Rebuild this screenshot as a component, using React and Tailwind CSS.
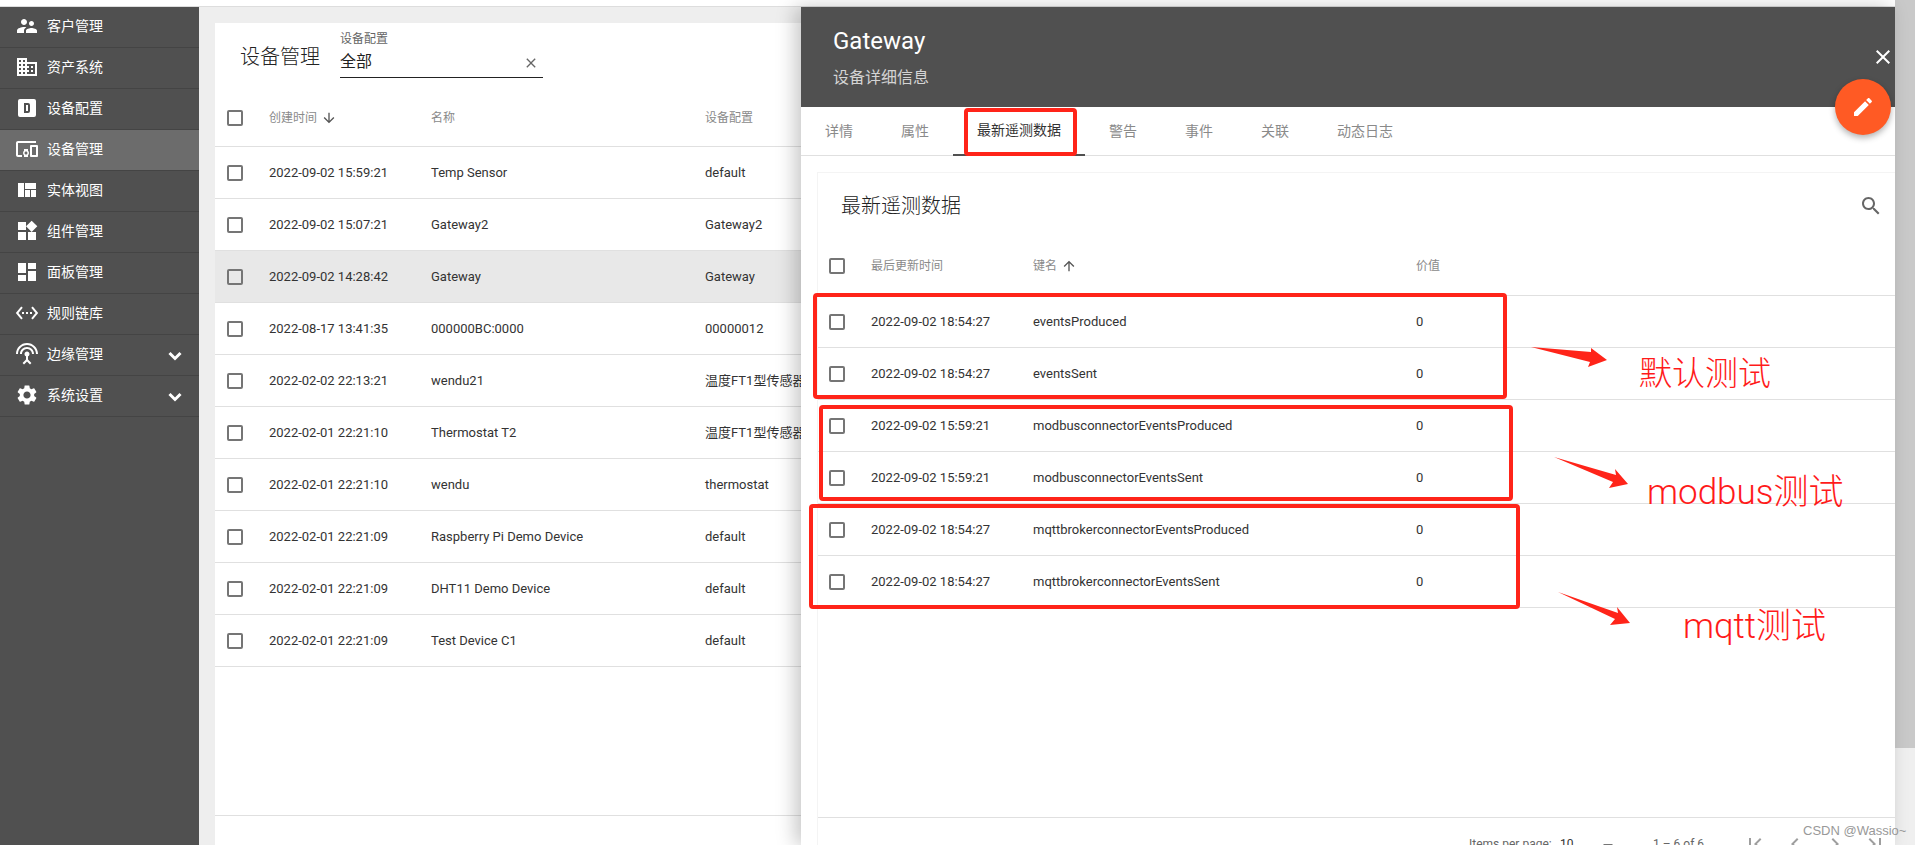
import React from 'react';

const menu = [
  { label: '客户管理', d: 'M16.5 12c1.38 0 2.49-1.12 2.49-2.5S17.88 7 16.5 7C15.12 7 14 8.12 14 9.5s1.12 2.5 2.5 2.5zM9 11c1.66 0 2.99-1.34 2.99-3S10.66 5 9 5C7.34 5 6 6.34 6 8s1.34 3 3 3zm7.5 3c-1.83 0-5.5.92-5.5 2.75V19h11v-2.25c0-1.83-3.67-2.75-5.5-2.75zM9 13c-2.33 0-7 1.17-7 3.5V19h7v-2.25c0-.85.33-2.34 2.37-3.47C10.5 13.1 9.66 13 9 13z' },
  { label: '资产系统', d: 'M12 7V3H2v18h20V7H12zM6 19H4v-2h2v2zm0-4H4v-2h2v2zm0-4H4V9h2v2zm0-4H4V5h2v2zm4 12H8v-2h2v2zm0-4H8v-2h2v2zm0-4H8V9h2v2zm0-4H8V5h2v2zm10 12h-8v-2h2v-2h-2v-2h2v-2h-2V9h8v10zm-2-8h-2v2h2v-2zm0 4h-2v2h2v-2z' },
  { label: '设备配置', d: 'M9,7V17H13A2,2 0 0,0 15,15V9A2,2 0 0,0 13,7H9M11,9H13V15H11V9M5,3H19A2,2 0 0,1 21,5V19A2,2 0 0,1 19,21H5A2,2 0 0,1 3,19V5A2,2 0 0,1 5,3Z' },
  { label: '设备管理', active: true, d: 'M3 6h18V4H3c-1.1 0-2 .9-2 2v12c0 1.1.9 2 2 2h4v-2H3V6zm10 6H9v1.78c-.61.55-1 1.33-1 2.22s.39 1.67 1 2.22V20h4v-1.78c.61-.55 1-1.34 1-2.22s-.39-1.67-1-2.22V12zm-2 5.5c-.83 0-1.5-.67-1.5-1.5s.67-1.5 1.5-1.5 1.5.67 1.5 1.5-.67 1.5-1.5 1.5zM22 8h-6c-.5 0-1 .5-1 1v10c0 .5.5 1 1 1h6c.5 0 1-.5 1-1V9c0-.5-.5-1-1-1zm-1 10h-4v-8h4v8z' },
  { label: '实体视图', d: 'M3 19h6V5H3zM10 5h11v6H10zM10 19h5v-7h-5zM16 19h5v-7h-5z' },
  { label: '组件管理', d: 'M13 13v8h8v-8h-8zM3 21h8v-8H3v8zM3 3v8h8V3H3zm13.66-1.31L11 7.34 16.66 13l5.66-5.66-5.66-5.65z' },
  { label: '面板管理', d: 'M3 13h8V3H3v10zm0 8h8v-6H3v6zm10 0h8V11h-8v10zm0-18v6h8V3h-8z' },
  { label: '规则链库', d: 'M7.77 6.76L6.23 5.48.82 12l5.41 6.52 1.54-1.28L3.42 12l4.35-5.24zM7 13h2v-2H7v2zm10-2h-2v2h2v-2zm-6 2h2v-2h-2v2zm6.77-7.52l-1.54 1.28L20.58 12l-4.35 5.24 1.54 1.28L23.18 12l-5.41-6.52z' },
  { label: '边缘管理', arrow: true, d: 'M12 5c-3.87 0-7 3.13-7 7h2c0-2.76 2.24-5 5-5s5 2.24 5 5h2c0-3.87-3.13-7-7-7zm1 9.29c.88-.39 1.5-1.26 1.5-2.29 0-1.38-1.12-2.5-2.5-2.5S9.5 10.62 9.5 12c0 1.02.62 1.9 1.5 2.29v3.3L7.59 21 9 22.41l3-3 3 3L16.41 21 13 17.59v-3.3zM12 1C5.93 1 1 5.93 1 12h2c0-4.97 4.03-9 9-9s9 4.03 9 9h2c0-6.07-4.93-11-11-11z' },
  { label: '系统设置', arrow: true, d: 'M19.14 12.94c.04-.3.06-.61.06-.94 0-.32-.02-.64-.07-.94l2.03-1.58a.49.49 0 0 0 .12-.61l-1.92-3.32a.488.488 0 0 0-.59-.22l-2.39.96c-.5-.38-1.03-.7-1.62-.94l-.36-2.54a.484.484 0 0 0-.48-.41h-3.84c-.24 0-.43.17-.47.41l-.36 2.54c-.59.24-1.13.57-1.62.94l-2.39-.96c-.22-.08-.47 0-.59.22L2.74 8.87c-.12.21-.08.47.12.61l2.03 1.58c-.05.3-.09.63-.09.94s.02.64.07.94l-2.03 1.58a.49.49 0 0 0-.12.61l1.92 3.32c.12.22.37.29.59.22l2.39-.96c.5.38 1.03.7 1.62.94l.36 2.54c.05.24.24.41.48.41h3.84c.24 0 .44-.17.47-.41l.36-2.54c.59-.24 1.13-.56 1.62-.94l2.39.96c.22.08.47 0 .59-.22l1.92-3.32c.12-.22.07-.47-.12-.61l-2.01-1.58zM12 15.6c-1.98 0-3.6-1.62-3.6-3.6s1.62-3.6 3.6-3.6 3.6 1.62 3.6 3.6-1.62 3.6-3.6 3.6z' },
];

const devices = [
  ['2022-09-02 15:59:21', 'Temp Sensor', 'default'],
  ['2022-09-02 15:07:21', 'Gateway2', 'Gateway2'],
  ['2022-09-02 14:28:42', 'Gateway', 'Gateway'],
  ['2022-08-17 13:41:35', '000000BC:0000', '00000012'],
  ['2022-02-02 22:13:21', 'wendu21', '温度FT1型传感器'],
  ['2022-02-01 22:21:10', 'Thermostat T2', '温度FT1型传感器'],
  ['2022-02-01 22:21:10', 'wendu', 'thermostat'],
  ['2022-02-01 22:21:09', 'Raspberry Pi Demo Device', 'default'],
  ['2022-02-01 22:21:09', 'DHT11 Demo Device', 'default'],
  ['2022-02-01 22:21:09', 'Test Device C1', 'default'],
];

const telemetry = [
  ['2022-09-02 18:54:27', 'eventsProduced'],
  ['2022-09-02 18:54:27', 'eventsSent'],
  ['2022-09-02 15:59:21', 'modbusconnectorEventsProduced'],
  ['2022-09-02 15:59:21', 'modbusconnectorEventsSent'],
  ['2022-09-02 18:54:27', 'mqttbrokerconnectorEventsProduced'],
  ['2022-09-02 18:54:27', 'mqttbrokerconnectorEventsSent'],
];

const tabs = ['详情', '属性', '最新遥测数据', '警告', '事件', '关联', '动态日志'];

const Icon = ({ d, className }) => (
  <svg viewBox="0 0 24 24" fill="currentColor" fillRule="evenodd" className={className}>
    <path d={d} />
  </svg>
);

const Checkbox = () => (
  <div className="w-[16px] h-[16px] border-2 border-[#757575] rounded-[2px] shrink-0" />
);

const Sidebar = () => (
  <div className="w-[199px] shrink-0 bg-[#505050] text-white">
    {menu.map(item => (
      <div
        key={item.label}
        className={`h-[41px] pb-[2px] flex items-center border-b border-[#444444] ${item.active ? 'bg-[#6c6c6c]' : ''}`}
      >
        <div className="w-[47px] shrink-0 flex justify-center pl-[7px]">
          <Icon d={item.d} className="w-[24px] h-[24px]" />
        </div>
        <span className="text-[14px] flex-1">{item.label}</span>
        {item.arrow && (
          <svg viewBox="0 0 14 10" fill="none" stroke="currentColor" strokeWidth="3" className="w-[14px] h-[10px] mr-[17px] mt-[3px]">
            <path d="M1.5 2 7 7.5 12.5 2" />
          </svg>
        )}
      </div>
    ))}
  </div>
);

const DeviceCard = () => (
  <div className="h-full bg-white flex flex-col">
    <div className="h-[65px] shrink-0 flex">
      <div className="w-[125px] pl-[25px] pt-[20px] text-[20px] leading-[28px] font-light text-[#222222]">设备管理</div>
      <div className="w-[203px] h-[47px] mt-[8px] border-b border-[#222222] relative">
        <div className="text-[12px] leading-[16px] text-[#666666]">设备配置</div>
        <div className="text-[16px] leading-[22px] mt-[4px] text-[#222222]">全部</div>
        <Icon
          d="M19 6.41L17.59 5 12 10.59 6.41 5 5 6.41 10.59 12 5 17.59 6.41 19 12 13.41 17.59 19 19 17.59 13.41 12z"
          className="w-[16px] h-[16px] absolute right-[4px] top-[24px] text-[#666666]"
        />
      </div>
    </div>
    <div className="h-[59px] pt-[1px] shrink-0 flex items-center border-b border-[#e0e0e0] text-[12px] text-[#8a8a8a]">
      <div className="w-[54px] pl-[12px] shrink-0"><Checkbox /></div>
      <div className="w-[162px] shrink-0 flex items-center gap-[4px]">
        创建时间
        <Icon d="M20 12l-1.41-1.41L13 16.17V4h-2v12.17l-5.58-5.59L4 12l8 8 8-8z" className="w-[16px] h-[16px] text-[#555555]" />
      </div>
      <div className="w-[274px] shrink-0">名称</div>
      <div>设备配置</div>
    </div>
    {devices.map(row => (
      <div
        key={row[0] + row[1]}
        className={`h-[52px] shrink-0 flex items-center border-b border-[#e0e0e0] text-[13px] text-[#333333] ${row[1] === 'Gateway' ? 'bg-[#e8e8e8]' : ''}`}
      >
        <div className="w-[54px] pl-[12px] shrink-0"><Checkbox /></div>
        <div className="w-[162px] shrink-0">{row[0]}</div>
        <div className="w-[274px] shrink-0">{row[1]}</div>
        <div>{row[2]}</div>
      </div>
    ))}
    <div className="flex-1" />
    <div className="h-[30px] shrink-0 border-t border-[#e0e0e0]" />
  </div>
);

const Drawer = () => (
  <div className="absolute left-[801px] right-0 top-[7px] bottom-0 bg-white flex flex-col overflow-hidden shadow-[-6px_0_18px_rgba(0,0,0,0.22)]">
    <div className="h-[100px] shrink-0 bg-[#505050] pl-[32px] pt-[19px] text-white">
      <div className="text-[24px] leading-[30px]">Gateway</div>
      <div className="text-[16px] leading-[22px] mt-[11px] text-[#d4d4d4]">设备详细信息</div>
    </div>
    <Icon
      d="M19 6.41L17.59 5 12 10.59 6.41 5 5 6.41 10.59 12 5 17.59 6.41 19 12 13.41 17.59 19 19 17.59 13.41 12z"
      className="w-[24px] h-[24px] absolute right-0 top-[38px] text-white"
    />
    <div className="absolute right-[4px] top-[72px] w-[56px] h-[56px] rounded-full bg-[#ff5a24] flex items-center justify-center text-white shadow-[0_3px_6px_rgba(0,0,0,0.3)]">
      <Icon d="M3 17.25V21h3.75L17.81 9.94l-3.75-3.75L3 17.25zM20.71 7.04c.39-.39.39-1.02 0-1.41l-2.34-2.34c-.39-.39-1.02-.39-1.41 0l-1.83 1.83 3.75 3.75 1.83-1.83z" className="w-[24px] h-[24px]" />
    </div>
    <div className="h-[49px] shrink-0 flex border-b border-[#e0e0e0] text-[14px]">
      {tabs.map(tab => (
        <div
          key={tab}
          className={`h-[49px] px-[24px] flex items-center ${tab === '最新遥测数据' ? 'text-[#333333] border-b-2 border-[#505050]' : 'text-[#8a8a8a]'}`}
        >
          {tab}
        </div>
      ))}
    </div>
    <div className="flex-1 min-h-0 pl-[16px] pt-[16px]">
      <div className="h-[700px] border-l border-t border-[#f4f4f4]">
        <div className="h-[64px] flex items-center justify-between pr-[12px] pt-[1px]">
          <div className="pl-[23px] text-[20px] font-light text-[#222222]">最新遥测数据</div>
          <Icon d="M15.5 14h-.79l-.28-.27C15.41 12.59 16 11.11 16 9.5 16 5.91 13.09 3 9.5 3S3 5.91 3 9.5 5.91 16 9.5 16c1.61 0 3.09-.59 4.23-1.57l.27.28v.79l5 4.99L20.49 19l-4.99-5zm-6 0C7.01 14 5 11.99 5 9.5S7.01 5 9.5 5 14 7.01 14 9.5 11.99 14 9.5 14z" className="w-[24px] h-[24px] text-[#666666]" />
        </div>
        <div className="h-[59px] flex items-center border-b border-[#e0e0e0] text-[12px] text-[#8a8a8a]">
          <div className="w-[53px] pl-[11px] shrink-0"><Checkbox /></div>
          <div className="w-[162px] shrink-0">最后更新时间</div>
          <div className="w-[383px] shrink-0 flex items-center gap-[4px]">
            键名
            <Icon d="M4 12l1.41 1.41L11 7.83V20h2V7.83l5.58 5.59L20 12l-8-8-8 8z" className="w-[16px] h-[16px] text-[#555555]" />
          </div>
          <div>价值</div>
        </div>
        {telemetry.map(row => (
          <div key={row[1]} className="h-[52px] pt-[1px] flex items-center border-b border-[#e0e0e0] text-[13px] text-[#333333]">
            <div className="w-[53px] pl-[11px] shrink-0"><Checkbox /></div>
            <div className="w-[162px] shrink-0">{row[0]}</div>
            <div className="w-[383px] shrink-0">{row[1]}</div>
            <div>0</div>
          </div>
        ))}
        <div className="h-[209px]" />
        <div className="border-t border-[#e0e0e0] pt-[18px] pl-[651px] flex text-[12px] leading-[16px] text-[#666666]">
          <span className="w-[91px] shrink-0">Items per page:</span>
          <span className="w-[43px] shrink-0 text-[#333333]">10</span>
          <svg viewBox="0 0 10 5" className="w-[10px] h-[5px] mt-[8px] shrink-0 text-[#757575]" fill="currentColor"><path d="M0 0h10L5 5z" /></svg>
          <span className="ml-[40px] w-[90px] shrink-0">1 – 6 of 6</span>
          <div className="flex gap-[16px] -mt-[4px] text-[#9e9e9e]">
            <Icon d="M18.41 16.59L13.82 12l4.59-4.59L17 6l-6 6 6 6zM6 6h2v12H6z" className="w-[24px] h-[24px]" />
            <Icon d="M15.41 7.41L14 6l-6 6 6 6 1.41-1.41L10.83 12z" className="w-[24px] h-[24px]" />
            <Icon d="M10 6L8.59 7.41 13.17 12l-4.58 4.59L10 18l6-6z" className="w-[24px] h-[24px]" />
            <Icon d="M5.59 7.41L10.18 12l-4.59 4.59L7 18l6-6-6-6zM16 6h2v12h-2z" className="w-[24px] h-[24px]" />
          </div>
        </div>
      </div>
    </div>
  </div>
);

// 截图上手工加的红框、箭头和文字
const Annotations = () => (
  <>
    <div className="absolute left-[964px] top-[108px] w-[113px] h-[48px] border-4 border-[#ff2419] rounded-[4px]" />
    <div className="absolute left-[813px] top-[293px] w-[694px] h-[106px] border-4 border-[#ff2419] rounded-[4px]" />
    <div className="absolute left-[819px] top-[405px] w-[694px] h-[96px] border-4 border-[#ff2419] rounded-[4px]" />
    <div className="absolute left-[809px] top-[504px] w-[711px] h-[105px] border-4 border-[#ff2419] rounded-[4px]" />
    <svg className="absolute left-0 top-0 w-[1916px] h-[845px] pointer-events-none" viewBox="0 0 1916 845" fill="#ff2419">
      <polygon points="1531,347 1591,352 1591,348 1607,360 1588,367 1590,362" />
      <polygon points="1554,457 1616,475 1615,469 1628,484 1609,488 1613,482" />
      <polygon points="1558,592 1618,613 1617,607 1630,623 1610,625 1615,619" />
    </svg>
    <div className="absolute left-[1639px] top-[350px] text-[33px] leading-[48px] font-light text-[#ff1a1a]">默认测试</div>
    <div className="absolute left-[1647px] top-[469px] text-[35px] leading-[48px] font-light text-[#ff1a1a]">modbus测试</div>
    <div className="absolute left-[1683px] top-[603px] text-[35px] leading-[48px] font-light text-[#ff1a1a]">mqtt测试</div>
    <div className="absolute left-[1803px] top-[823px] text-[13px] leading-[16px] text-[#999999] font-[family-name:'Liberation_Sans',sans-serif]">CSDN @Wassio~</div>
  </>
);

export default function App() {
  return (
    <div className="w-[1916px] h-[845px] relative overflow-hidden bg-white flex font-[family-name:Roboto,'Noto_Sans_CJK_SC',sans-serif]">
      <div className="flex-1 min-w-0 relative flex flex-col">
        <div className="h-[7px] shrink-0 bg-white border-b border-[#dddddd]" />
        <div className="flex-1 min-h-0 flex">
          <Sidebar />
          <div className="flex-1 min-w-0 bg-[#eeeeee] pl-[16px] pt-[16px]">
            <DeviceCard />
          </div>
        </div>
        <Drawer />
      </div>
      <div className="w-[21px] shrink-0 pr-px bg-white flex flex-col">
        <div className="h-[748px] bg-[#c9c9c9]" />
        <div className="flex-1 bg-[#efefef]" />
      </div>
      <Annotations />
    </div>
  );
}
